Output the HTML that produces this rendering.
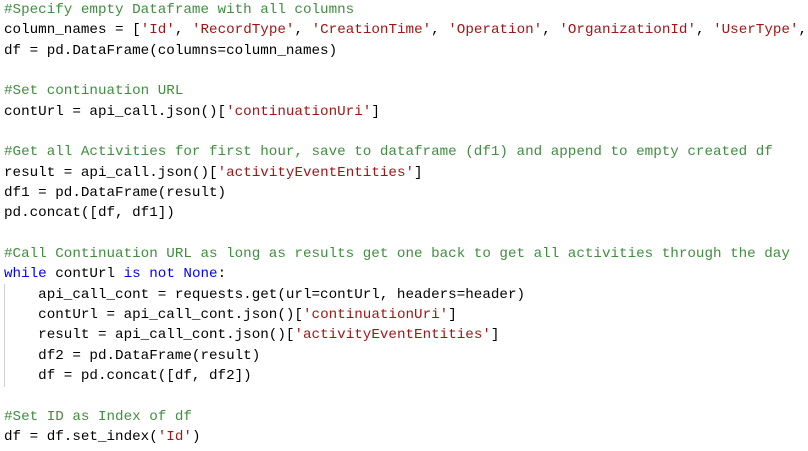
<!DOCTYPE html>
<html><head><style>
html,body{margin:0;padding:0;background:#fff;width:808px;height:451px;overflow:hidden}
pre{margin:0;position:absolute;left:4px;top:0px;font-family:"Liberation Mono",monospace;font-size:14.24px;line-height:20.33px;color:#000;white-space:pre}
.c{color:#3f8f3f}.s{color:#a31515}.k{color:#0000ff}
.g{position:absolute;left:4px;top:284px;width:1px;height:103px;background:#d0d0d0}
</style></head><body>
<div class="g"></div>
<pre><span class="c">#Specify empty Dataframe with all columns</span>
column_names = [<span class="s">'Id'</span>, <span class="s">'RecordType'</span>, <span class="s">'CreationTime'</span>, <span class="s">'Operation'</span>, <span class="s">'OrganizationId'</span>, <span class="s">'UserType'</span>,
df = pd.DataFrame(columns=column_names)

<span class="c">#Set continuation URL</span>
contUrl = api_call.json()[<span class="s">'continuationUri'</span>]

<span class="c">#Get all Activities for first hour, save to dataframe (df1) and append to empty created df</span>
result = api_call.json()[<span class="s">'activityEventEntities'</span>]
df1 = pd.DataFrame(result)
pd.concat([df, df1])

<span class="c">#Call Continuation URL as long as results get one back to get all activities through the day</span>
<span class="k">while</span> contUrl <span class="k">is not None</span>:
    api_call_cont = requests.get(url=contUrl, headers=header)
    contUrl = api_call_cont.json()[<span class="s">'continuationUri'</span>]
    result = api_call_cont.json()[<span class="s">'activityEventEntities'</span>]
    df2 = pd.DataFrame(result)
    df = pd.concat([df, df2])

<span class="c">#Set ID as Index of df</span>
df = df.set_index(<span class="s">'Id'</span>)</pre>
</body></html>
